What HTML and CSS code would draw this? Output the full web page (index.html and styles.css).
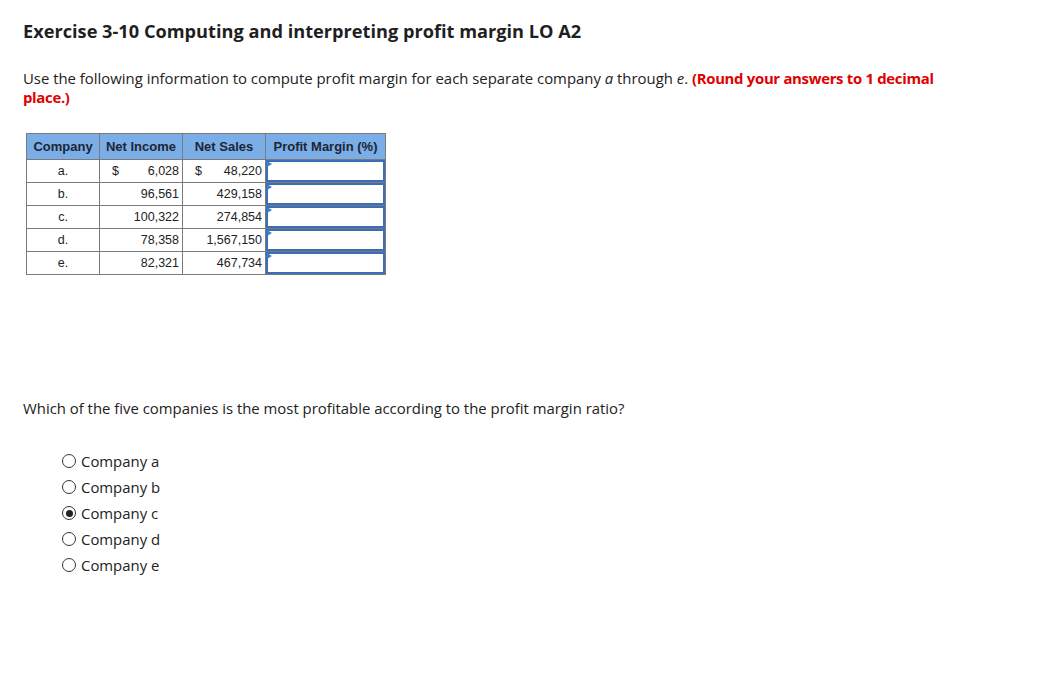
FILE: index.html
```html
<!DOCTYPE html>
<html>
<head>
<meta charset="utf-8">
<link rel="stylesheet" href="styles.css">
</head>
<body>
<div class="page">
  <h1 class="title">Exercise 3-10 Computing and interpreting profit margin LO A2</h1>
  <p class="intro">Use the following information to compute profit margin for each separate company <i>a</i> through <i>e</i>. <span class="hint">(Round your answers to 1 decimal</span> <span class="hint">place.)</span></p>
  <table class="grid">
    <colgroup>
      <col class="w-co">
      <col class="w-ni">
      <col class="w-ns">
      <col class="w-pm">
    </colgroup>
    <thead>
      <tr>
        <th>Company</th>
        <th>Net Income</th>
        <th>Net Sales</th>
        <th>Profit Margin (%)</th>
      </tr>
    </thead>
    <tbody>
      <tr>
        <td class="co">a.</td>
        <td class="num"><span class="cur">$</span>6,028</td>
        <td class="num"><span class="cur">$</span>48,220</td>
        <td class="inp"><div class="box"></div></td>
      </tr>
      <tr>
        <td class="co">b.</td>
        <td class="num">96,561</td>
        <td class="num">429,158</td>
        <td class="inp"><div class="box"></div></td>
      </tr>
      <tr>
        <td class="co">c.</td>
        <td class="num">100,322</td>
        <td class="num">274,854</td>
        <td class="inp"><div class="box"></div></td>
      </tr>
      <tr>
        <td class="co">d.</td>
        <td class="num">78,358</td>
        <td class="num">1,567,150</td>
        <td class="inp"><div class="box"></div></td>
      </tr>
      <tr>
        <td class="co">e.</td>
        <td class="num">82,321</td>
        <td class="num">467,734</td>
        <td class="inp"><div class="box"></div></td>
      </tr>
    </tbody>
  </table>
  <p class="question">Which of the five companies is the most profitable according to the profit margin ratio?</p>
  <ul class="choices">
    <li><span class="radio"></span>Company a</li>
    <li><span class="radio"></span>Company b</li>
    <li><span class="radio on"></span>Company c</li>
    <li><span class="radio"></span>Company d</li>
    <li><span class="radio"></span>Company e</li>
  </ul>
</div>
</body>
</html>
```

FILE: styles.css
```css
html, body {
  margin: 0;
  padding: 0;
  background: #ffffff;
}
body {
  font-family: "Open Sans", Lato, sans-serif;
  color: #222222;
}
.page {
  padding: 18px 0 0 23px;
}
.title {
  margin: 0;
  font-size: 18.2px;
  font-weight: 700;
  line-height: 26px;
  color: #1f1f1f;
}
.intro {
  margin: 25px 0 0 0;
  width: 935px;
  font-size: 14.9px;
  line-height: 19px;
  color: #222;
}
.hint {
  color: #e00000;
  font-weight: 700;
  letter-spacing: -0.3px;
}
.grid {
  margin: 26px 0 0 3px;
  border-collapse: collapse;
  table-layout: fixed;
  width: 359px;
  font-family: "Liberation Sans", Arial, sans-serif;
  font-size: 12.5px;
  border: 1px solid #7a7a7a;
}
.w-co { width: 73px; }
.w-ni { width: 83px; }
.w-ns { width: 83px; }
.w-pm { width: 120px; }
.grid th {
  background: #7baee6;
  color: #1c2635;
  font-weight: 700;
  font-size: 13px;
  height: 25px;
  padding: 0;
  border: 1px solid #7a7a7a;
  white-space: nowrap;
}
.grid td {
  height: 22px;
  padding: 0 3px;
  border: 1px solid #7a7a7a;
  color: #222;
}
.co {
  text-align: center;
}
.num {
  text-align: right;
}
.cur {
  float: left;
  padding-left: 9px;
}
.grid td.inp {
  padding: 0;
  position: relative;
}
.box {
  height: 18px;
  border: 2px solid #3a6fb6;
  background: #fff;
}
.box::before {
  content: "";
  position: absolute;
  left: 1px;
  top: 1px;
  border-top: 3px solid transparent;
  border-bottom: 3px solid transparent;
  border-left: 5px solid #3a7fd5;
}
.question {
  margin: 124px 0 0 0;
  font-size: 14.9px;
  line-height: 19px;
}
.choices {
  list-style: none;
  margin: 30px 0 0 39px;
  padding: 0;
  font-size: 14.9px;
}
.choices li {
  height: 26px;
  display: flex;
  align-items: center;
}
.radio {
  width: 12px;
  height: 12px;
  border: 1px solid #333;
  border-radius: 50%;
  margin-right: 5px;
  position: relative;
  box-sizing: content-box;
}
.radio.on::after {
  content: "";
  position: absolute;
  left: 2.5px;
  top: 2.5px;
  width: 7px;
  height: 7px;
  border-radius: 50%;
  background: #222;
}
```
